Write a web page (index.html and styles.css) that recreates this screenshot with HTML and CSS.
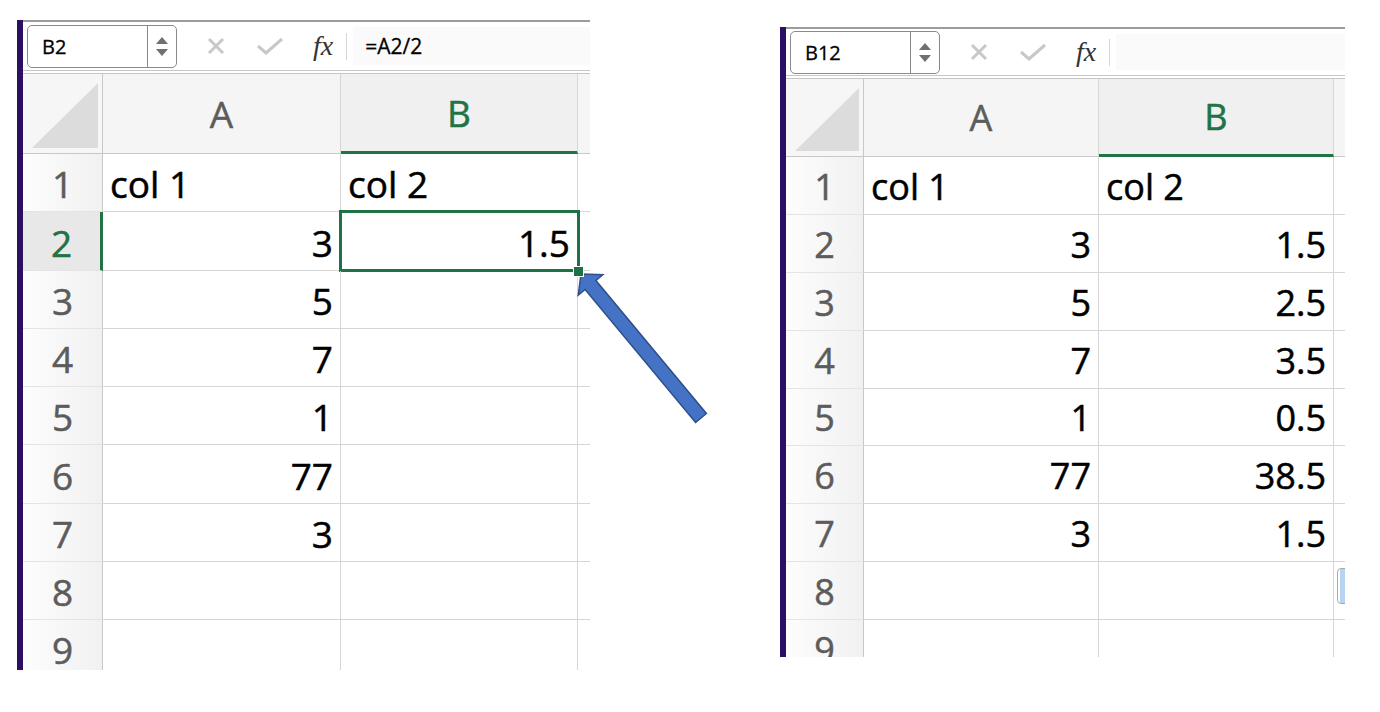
FILE: index.html
```html
<!DOCTYPE html>
<html lang="en">
<head>
  <meta charset="UTF-8" />
  <title>Fill formula down</title>
  <link rel="stylesheet" href="styles.css">
</head>
<body>

<div class="panels">

  <!-- antes: formula solo en B2 -->
  <div class="panel panel-left">
    <div class="formula-bar">
      <div class="name-box">
        <span class="name">B2</span>
        <span class="spinner">
          <svg width="12" height="28" viewBox="0 0 12 28"><path d="M6 5 L12 12 L0 12 Z M0 17 L12 17 L6 24 Z" fill="#707070"/></svg>
        </span>
      </div>
      <svg class="icon icon-cancel" width="18" height="18" viewBox="0 0 18 18"><path d="M2 2 L16 16 M16 2 L2 16" stroke="#c8c8c8" stroke-width="3"/></svg>
      <svg class="icon icon-ok" width="26" height="18" viewBox="0 0 26 18"><path d="M1 9 L9 16 L25 2" stroke="#c8c8c8" stroke-width="3" fill="none"/></svg>
      <span class="fx">fx</span>
      <span class="fx-sep"></span>
      <div class="formula">=A2/2</div>
    </div>

    <div class="sheet">
      <div class="corner"><span class="corner-tri"></span></div>
      <div class="col-head">A</div>
      <div class="col-head active">B</div>
      <div class="col-head"></div>

      <div class="row-head">1</div><div class="cell">col 1</div><div class="cell">col 2</div><div class="cell"></div>
      <div class="row-head active">2</div><div class="cell num">3</div><div class="cell num selected">1.5<span class="handle"></span></div><div class="cell"></div>
      <div class="row-head">3</div><div class="cell num">5</div><div class="cell"></div><div class="cell"></div>
      <div class="row-head">4</div><div class="cell num">7</div><div class="cell"></div><div class="cell"></div>
      <div class="row-head">5</div><div class="cell num">1</div><div class="cell"></div><div class="cell"></div>
      <div class="row-head">6</div><div class="cell num">77</div><div class="cell"></div><div class="cell"></div>
      <div class="row-head">7</div><div class="cell num">3</div><div class="cell"></div><div class="cell"></div>
      <div class="row-head">8</div><div class="cell"></div><div class="cell"></div><div class="cell"></div>
      <div class="row-head">9</div><div class="cell"></div><div class="cell"></div><div class="cell"></div>
    </div>
  </div>

  <!-- despues: formula copiada hacia abajo -->
  <div class="panel panel-right">
    <div class="formula-bar">
      <div class="name-box">
        <span class="name">B12</span>
        <span class="spinner">
          <svg width="12" height="28" viewBox="0 0 12 28"><path d="M6 5 L12 12 L0 12 Z M0 17 L12 17 L6 24 Z" fill="#707070"/></svg>
        </span>
      </div>
      <svg class="icon icon-cancel" width="18" height="18" viewBox="0 0 18 18"><path d="M2 2 L16 16 M16 2 L2 16" stroke="#c8c8c8" stroke-width="3"/></svg>
      <svg class="icon icon-ok" width="26" height="18" viewBox="0 0 26 18"><path d="M1 9 L9 16 L25 2" stroke="#c8c8c8" stroke-width="3" fill="none"/></svg>
      <span class="fx">fx</span>
      <span class="fx-sep"></span>
      <div class="formula"></div>
    </div>

    <div class="sheet">
      <div class="corner"><span class="corner-tri"></span></div>
      <div class="col-head">A</div>
      <div class="col-head active">B</div>
      <div class="col-head"></div>

      <div class="row-head">1</div><div class="cell">col 1</div><div class="cell">col 2</div><div class="cell"></div>
      <div class="row-head">2</div><div class="cell num">3</div><div class="cell num">1.5</div><div class="cell"></div>
      <div class="row-head">3</div><div class="cell num">5</div><div class="cell num">2.5</div><div class="cell"></div>
      <div class="row-head">4</div><div class="cell num">7</div><div class="cell num">3.5</div><div class="cell"></div>
      <div class="row-head">5</div><div class="cell num">1</div><div class="cell num">0.5</div><div class="cell"></div>
      <div class="row-head">6</div><div class="cell num">77</div><div class="cell num">38.5</div><div class="cell"></div>
      <div class="row-head">7</div><div class="cell num">3</div><div class="cell num">1.5</div><div class="cell"></div>
      <div class="row-head">8</div><div class="cell"></div><div class="cell"></div><div class="cell"><span class="paste-btn"></span></div>
      <div class="row-head">9</div><div class="cell"></div><div class="cell"></div><div class="cell"></div>
    </div>
  </div>

</div>

<svg class="arrow" width="145" height="165" viewBox="0 0 145 165">
  <polygon points="11,9 32.8,9.8 25.9,15.5 136.4,148.5 125.6,157.5 15.1,24.5 8.2,30.2"
           fill="#4472c4" stroke="#2f4f8a" stroke-width="1.5" stroke-linejoin="miter"/>
</svg>

</body>
</html>
```

FILE: styles.css
```css
body {
  margin: 0;
  background: #fff;
  font-family: "Open Sans", "Noto Sans", sans-serif;
  color: #000;
}
.panels {
  display: flex;
  align-items: flex-start;
  gap: 190px;
  padding: 20px 0 0 17px;
}
.panel {
  border-left: 6px solid #2b0f63;
  overflow: hidden;
  --rh: 80px;
  --cw: 238px;
  --cw2: 237px;
  --head: 80px;
  --row: 58.25px;
  --fs: 37px;
}
.panel-left {
  width: 567px;
  height: 650px;
}
.panel-right {
  width: 559px;
  height: 630px;
  margin-top: 7px;
  --rh: 78px;
  --cw: 235px;
  --cw2: 235px;
  --head: 78px;
  --row: 57.9px;
  --fs: 36px;
}

/* barra de formulas */
.formula-bar {
  display: flex;
  align-items: center;
  height: 48px;
  border-top: 2px solid #9c9c9c;
  border-bottom: 4px double #c6c6c6;
}
.panel-right .formula-bar {
  height: 46px;
}
.name-box {
  display: flex;
  align-items: center;
  width: 150px;
  height: 43px;
  margin-left: 4px;
  border: 1.5px solid #8a8a8a;
  border-radius: 5px;
  box-sizing: border-box;
}
.name {
  flex: 1;
  padding-left: 14px;
  font-size: 20px;
  -webkit-text-stroke: 0.3px #000;
}
.spinner {
  display: flex;
  justify-content: center;
  align-items: center;
  width: 28px;
  height: 100%;
  border-left: 1.5px solid #8a8a8a;
}
.icon-cancel {
  margin-left: 30px;
}
.icon-ok {
  margin-left: 32px;
}
.fx {
  margin-left: 30px;
  font-family: "Liberation Serif", "DejaVu Serif", serif;
  font-style: italic;
  font-size: 28px;
  color: #333;
  line-height: 1;
}
.fx-sep {
  width: 1px;
  height: 27px;
  margin-left: 13px;
  background: #d6d6d6;
}
.formula {
  flex: 1;
  align-self: stretch;
  display: flex;
  align-items: center;
  margin: 5px 0 5px 6px;
  padding-left: 12px;
  background: #fafafa;
  font-size: 21px;
  -webkit-text-stroke: 0.3px #000;
}

/* hoja */
.sheet {
  display: grid;
  grid-template-columns: var(--rh) var(--cw) var(--cw2) 1fr;
  grid-template-rows: var(--head);
  grid-auto-rows: var(--row);
  font-size: var(--fs);
  line-height: 1;
}
.sheet > div {
  box-sizing: border-box;
  border-right: 1px solid #d6d6d6;
  border-bottom: 1px solid #d6d6d6;
}
.corner {
  position: relative;
  background: #f6f6f6;
  border-right-color: #c8c8c8 !important;
  border-bottom-color: #c8c8c8 !important;
}
.corner-tri {
  position: absolute;
  left: 9px;
  top: 9px;
  right: 4px;
  bottom: 5px;
  background: #dcdcdc;
  clip-path: polygon(100% 0, 100% 100%, 0 100%);
}
.col-head {
  display: flex;
  justify-content: center;
  align-items: center;
  background: #f5f5f5;
  color: #5c5c5c;
  -webkit-text-stroke: 0.5px #5c5c5c;
  border-bottom-color: #c8c8c8 !important;
}
.col-head.active {
  background: #f0f0f0;
  color: #217346;
  -webkit-text-stroke: 0.5px #217346;
  border-bottom: 3px solid #217346 !important;
}
.row-head {
  display: flex;
  justify-content: center;
  align-items: flex-end;
  padding-bottom: 9px;
  background: linear-gradient(to right, #fdfdfd, #f1f1f1);
  color: #5c5c5c;
  -webkit-text-stroke: 0.5px #5c5c5c;
  border-right-color: #c8c8c8 !important;
  border-bottom-color: #e4e4e4 !important;
}
.row-head.active {
  background: #e8e8e8;
  color: #217346;
  -webkit-text-stroke: 0.5px #217346;
  border-right: 3px solid #217346 !important;
}
.cell {
  position: relative;
  display: flex;
  align-items: flex-end;
  padding: 0 7px 9px;
  -webkit-text-stroke: 0.5px #000;
}
.cell.num {
  justify-content: flex-end;
}
.cell.selected::after {
  content: '';
  position: absolute;
  left: -2px;
  top: -2px;
  right: -3px;
  bottom: -2px;
  border: 3px solid #1e7145;
}
.handle {
  position: absolute;
  right: -7px;
  bottom: -7px;
  width: 9px;
  height: 9px;
  background: #1e7145;
  border: 1px solid #fff;
  z-index: 1;
}
.paste-btn {
  position: absolute;
  left: 3px;
  top: 6px;
  width: 14px;
  height: 36px;
  box-sizing: border-box;
  border: 1px solid #a8a8a8;
  border-radius: 4px;
  background: linear-gradient(to right, #fff 0 2px, #b9d3f3 2px);
}

.arrow {
  position: absolute;
  left: 570px;
  top: 265px;
}
```
